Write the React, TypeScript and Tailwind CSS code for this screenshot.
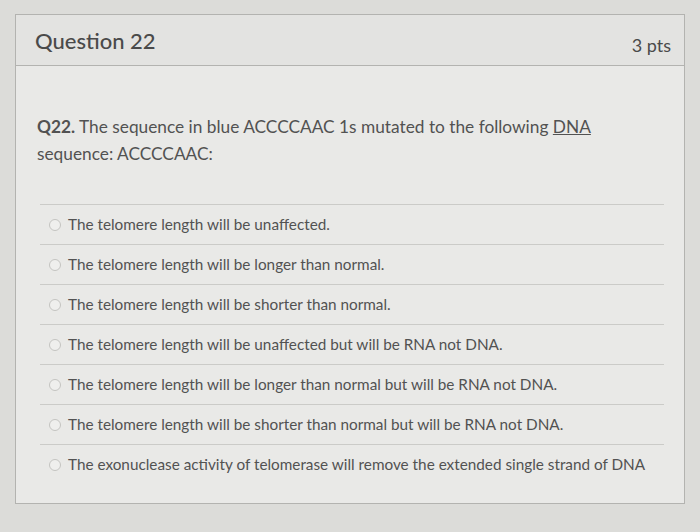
const options = [
  "The telomere length will be unaffected.",
  "The telomere length will be longer than normal.",
  "The telomere length will be shorter than normal.",
  "The telomere length will be unaffected but will be RNA not DNA.",
  "The telomere length will be longer than normal but will be RNA not DNA.",
  "The telomere length will be shorter than normal but will be RNA not DNA.",
  "The exonuclease activity of telomerase will remove the extended single strand of DNA",
];

const App = () => {
  return (
    <div className="w-[700px] h-[532px] bg-[#dcdcd9] pt-[14px] pl-[15px] font-['Lato','Liberation_Sans',sans-serif] text-[#525252]">
      <div className="w-[670px] h-[490px] border border-[#b3b3b0] bg-[#e9e9e7]">
        <div className="h-[51px] flex items-center justify-between pl-[19px] pr-[13px] bg-[#e3e3e1] border-b border-[#b3b3b0]">
          <h2 className="text-[22px] font-medium text-[#4a4a4a]">Question 22</h2>
          <span className="text-[18px] text-[#4a4a4a] mt-[10px]">3 pts</span>
        </div>
        <div className="pt-[47px] pl-[21px] pr-[20px]">
          <p className="text-[17.3px] leading-[27px]">
            <span className="font-bold">Q22.</span> The sequence in blue ACCCCAAC 1s mutated to the following{" "}
            <span className="underline">DNA</span>
            <br />
            sequence: ACCCCAAC:
          </p>
          <ul className="mt-[37px] ml-[3px]">
            {options.map((opt) => (
              <li
                key={opt}
                className="h-[40px] flex items-center gap-[7px] pl-[9px] border-t border-[#cbcbc8] text-[15.3px]"
              >
                <span className="w-[12px] h-[12px] rounded-full border border-[#c4c4c1] bg-[#efefed] shrink-0" />
                <span>{opt}</span>
              </li>
            ))}
          </ul>
        </div>
      </div>
    </div>
  );
};

export default App;
